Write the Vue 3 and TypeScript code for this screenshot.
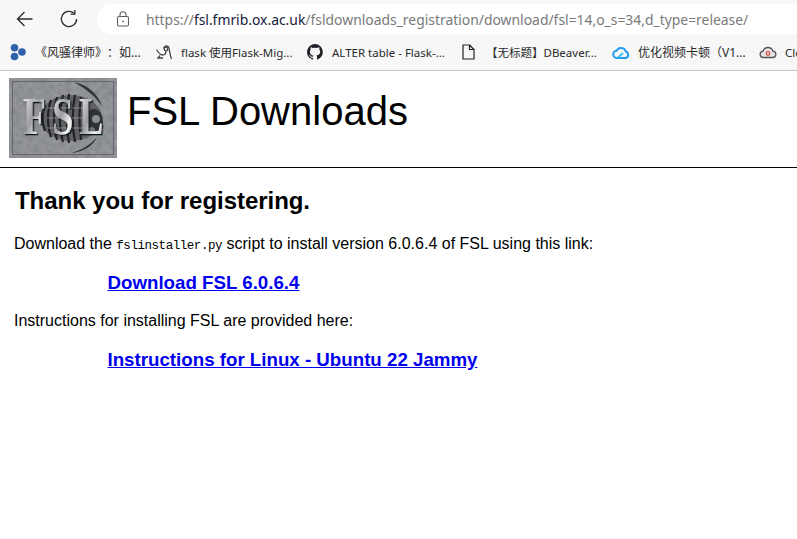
<script setup lang="ts">
interface Bookmark { label: string; icon: string; width: number; wide?: boolean }
const bookmarks: Bookmark[] = [
  { label: '《风骚律师》：如...', icon: 'dots', width: 146, wide: true },
  { label: 'flask 使用Flask-Mig...', icon: 'bird', width: 151 },
  { label: 'ALTER table - Flask-...', icon: 'github', width: 154 },
  { label: '【无标题】DBeaver...', icon: 'doc', width: 152 },
  { label: '优化视频卡顿（V1...', icon: 'cloud', width: 147, wide: true },
  { label: 'Cloud', icon: 'cloudred', width: 60 },
]
</script>

<template>
  <div class="page">
    <div class="chrome">
      <div class="toolbar">
        <svg class="nav back" width="20" height="20" viewBox="0 0 20 20" fill="none" stroke="#2b2b2b" stroke-width="1.3">
          <path d="M17.500 10H2.500M9.500 3 2.500 10l7 7" />
        </svg>
        <svg class="nav reload" width="20" height="20" viewBox="0 0 20 20" fill="none" stroke="#2b2b2b" stroke-width="1.3">
          <path d="M15.200 4.400A7.600 7.600 0 1 0 17.600 10" />
          <path d="M15.800 1v4.200h-4.200" />
        </svg>
        <div class="omnibox">
          <svg class="lock" width="14" height="16" viewBox="0 0 14 16" fill="none" stroke="#5f5f5f" stroke-width="1.1">
            <rect x="1.500" y="5.500" width="11" height="9.500" rx="1.600" />
            <path d="M4 5.500V3.800a3 3 0 0 1 6 0v1.700" />
            <circle cx="7" cy="10.300" r=".9" fill="#5f5f5f" stroke="none" />
          </svg>
          <span class="url"><span class="dim">https://</span><span class="host">fsl.fmrib.ox.ac.uk</span><span class="dim">/fsldownloads_registration/download/fsl=14,o_s=34,d_type=release/</span></span>
        </div>
      </div>
      <div class="bookmarks">
        <div v-for="b in bookmarks" :key="b.label" class="bookmark" :style="{ width: b.width + 'px' }">
          <svg class="bicon" width="18" height="18" viewBox="0 0 18 18">
            <g v-if="b.icon === 'dots'" fill="#2f62ab">
              <circle cx="5.500" cy="4.800" r="3.800" /><circle cx="13" cy="9" r="3.800" /><circle cx="5.500" cy="13.500" r="3.800" />
            </g>
            <g v-else-if="b.icon === 'bird'" fill="none" stroke="#444" stroke-width="1.300">
              <path d="M1.500 6.500c1.500 2.500 3.500 5.500 6 5.500 2.500 0 3.500-2 3.500-4M5 12.500l-2 2.500h5" />
              <path d="M8.500 5.500c.5-3 5-3.500 5.500-.5.500 3 1 7 2.500 11" />
              <circle cx="11" cy="6" r="1.800" />
            </g>
            <g v-else-if="b.icon === 'github'">
              <path fill="#1f2328" d="M9 1a8 8 0 0 0-2.500 15.600c.4.1.5-.2.5-.4v-1.400c-2.200.5-2.700-1-2.700-1-.4-.9-.9-1.200-.9-1.200-.7-.5.100-.5.100-.5.800.1 1.200.8 1.200.8.700 1.200 1.900.9 2.300.7.100-.5.300-.9.500-1.100-1.800-.2-3.600-.9-3.600-4 0-.9.300-1.600.8-2.100-.1-.2-.4-1 .1-2.100 0 0 .7-.2 2.200.8a7.600 7.600 0 0 1 4 0c1.500-1 2.200-.8 2.200-.8.400 1.100.200 1.900.100 2.100.5.600.8 1.300.8 2.100 0 3.100-1.900 3.700-3.600 3.900.300.200.500.700.500 1.500v2.200c0 .200.100.500.600.400A8 8 0 0 0 9 1z" />
            </g>
            <g v-else-if="b.icon === 'doc'" fill="none" stroke="#222" stroke-width="1.200">
              <path d="M3 2h6.500L14 6.500V16H3zM9.500 2v4.500H14" stroke-linejoin="round" />
            </g>
            <g v-else-if="b.icon === 'cloud'" fill="none" stroke="#1d9bf0" stroke-width="1.900">
              <path d="M5 15a3.600 3.600 0 0 1-.4-7.200 4.900 4.900 0 0 1 9.200.8A3.300 3.300 0 0 1 13.500 15z" />
              <path d="M5.500 15 11 10" stroke="#35c2e8" />
            </g>
            <g v-else>
              <path d="M4.500 14.500a3.200 3.200 0 0 1-.3-6.400 5 5 0 0 1 9.600 0 3.200 3.200 0 0 1-.3 6.400z" fill="#e6e6e6" stroke="#555" stroke-width="1.300" />
              <circle cx="9" cy="10.500" r="2.400" fill="#d9534f" />
              <circle cx="9" cy="10.500" r=".9" fill="#fff" />
            </g>
          </svg>
          <span class="blabel" :class="{ wide: b.wide }">{{ b.label }}</span>
        </div>
      </div>
    </div>

    <header class="site-header">
      <svg class="logo" width="108" height="80" viewBox="0 0 108 80">
        <defs>
          <filter id="grain" x="0" y="0" width="100%" height="100%">
            <feTurbulence type="fractalNoise" baseFrequency=".16" numOctaves="3" seed="7" result="n" />
            <feColorMatrix in="n" type="matrix" values="0 0 0 0 .38  0 0 0 0 .39  0 0 0 0 .42  .9 0 0 0 -.2" result="c" />
            <feComposite in="c" in2="SourceGraphic" operator="over" />
          </filter>
          <filter id="soft"><feGaussianBlur stdDeviation=".6" /></filter>
          <filter id="lift" x="-20%" y="-20%" width="150%" height="150%">
            <feDropShadow dx="1.300" dy="1.300" stdDeviation=".6" flood-color="#111214" flood-opacity="1" />
          </filter>
          <linearGradient id="metal" x1="0" y1="0" x2="1" y2="1">
            <stop offset="0" stop-color="#fafafa" />
            <stop offset=".45" stop-color="#9c9d9f" />
            <stop offset=".72" stop-color="#f4f4f4" />
            <stop offset="1" stop-color="#a4a5a8" />
          </linearGradient>
        </defs>
        <rect width="108" height="80" fill="#85878d" filter="url(#grain)" />
        <rect x="3.500" y="3.500" width="101" height="73" fill="none" stroke="#62656c" />
        <g filter="url(#soft)">
          <ellipse cx="62" cy="40" rx="31" ry="23" fill="#5e6065" />
          <g stroke="#222427" stroke-width="2.200" fill="none">
            <path d="M36 27c-3 8-3 18 0 26M42 22c-4 11-4 26 0 37M48 19c-4 13-4 30 0 43M54 17c-4 15-4 33 0 47M60 16c-3 16-3 33 0 49M66 17c-3 15-3 31 0 47M72 19c-2 13-2 29 0 43" />
            <path d="M38 30h36M38 40h36M38 50h36" stroke="#adafb2" stroke-width="1.200" stroke-opacity=".6" />
          </g>
          <ellipse cx="85" cy="44" rx="9" ry="13" fill="#2e3034" />
          <circle cx="87" cy="41" r="4" fill="#8a8c90" />
          <circle cx="83" cy="52" r="3" fill="#6f7175" />
          <path d="M65 4c14 3 24 12 28 24-7-10-16-17-28-24zM62 75c13-1 22-7 26-16-7 8-15 13-26 16z" fill="#33363b" />
        </g>
        <g class="logo-letters" filter="url(#lift)">
          <text class="logo-text" transform="translate(14 56) scale(.72 1)">F</text>
          <text class="logo-text" transform="translate(43 56) scale(.74 1)">S</text>
          <text class="logo-text" transform="translate(70 56) scale(.7 1)">L</text>
        </g>
      </svg>
      <h1 class="site-title">FSL Downloads</h1>
    </header>

    <main class="content">
      <h2 class="thanks">Thank you for registering.</h2>
      <p class="para">Download the <code class="mono">fslinstaller.py</code> script to install version 6.0.6.4 of FSL using this link:</p>
      <p class="linkline"><a href="#" class="biglink">Download FSL 6.0.6.4</a></p>
      <p class="para">Instructions for installing FSL are provided here:</p>
      <p class="linkline"><a href="#" class="biglink">Instructions for Linux - Ubuntu 22 Jammy</a></p>
    </main>
  </div>
</template>

<style>
html, body { margin: 0; background: #fff; overflow: hidden; }
</style>

<style scoped>
.page {
  width: 797px;
  height: 539px;
  overflow: hidden;
  background: #fff;
  font-family: "Liberation Sans", Arial, sans-serif;
  color: #000;
}
.chrome {
  height: 70px;
  background: #f7f7f7;
  border-bottom: 1px solid #c6c6c6;
}
.toolbar {
  height: 38px;
  display: flex;
  align-items: center;
  padding-left: 15px;
}
.reload { margin-left: 24px; }
.omnibox {
  margin-left: 18px;
  flex: 1;
  height: 30px;
  background: #fff;
  border-radius: 15px 0 0 15px;
  display: flex;
  align-items: center;
  padding-left: 19px;
  overflow: hidden;
}
.url {
  margin-left: 16px;
  font-family: "Noto Sans", "Open Sans", sans-serif;
  font-size: 13.900px;
  white-space: nowrap;
}
.dim { color: #7a7a7a; }
.host { color: #14203c; }
.bookmarks {
  height: 28px;
  display: flex;
  align-items: center;
  padding-left: 9px;
  overflow: hidden;
}
.bookmark {
  display: flex;
  align-items: center;
  flex: none;
  gap: 8px;
}
.bicon { flex: none; }
.blabel {
  font-family: "Noto Sans", "Noto Sans CJK SC", sans-serif;
  font-size: 11.500px;
  text-spacing-trim: space-all;
  color: #2a2a2a;
  white-space: nowrap;
}
.blabel.wide { font-size: 12px; }
.site-header {
  height: 97px;
  box-sizing: border-box;
  border-bottom: 1px solid #000;
  display: flex;
  align-items: flex-start;
  padding: 7px 0 0 9px;
}
.logo { flex: none; }
.logo-text {
  font-family: "Liberation Serif", serif;
  font-size: 52px;
  font-weight: 700;
  fill: url(#metal);
}
.site-title {
  margin: 10px 0 0 10px;
  font-size: 40px;
  font-weight: 400;
  line-height: 46px;
}
.content { padding: 0 14px; }
.thanks {
  margin: 19px 0 0 1px;
  font-size: 24px;
  line-height: 28px;
  font-weight: 700;
  letter-spacing: -.04px;
}
.para {
  margin: 19px 0 0;
  font-size: 16px;
  line-height: 20px;
}
.para + .linkline { margin-top: 17px; }
.linkline + .para { margin-top: 16px; }
.mono {
  font-family: "Liberation Mono", "DejaVu Sans Mono", monospace;
  font-size: 12.500px;
  letter-spacing: -.45px;
  line-height: 1;
}
.linkline {
  margin: 17px 0 0 93.500px;
  line-height: 24px;
  font-size: 18.720px;
  font-weight: 700;
}
.biglink { color: #0000ee; }
</style>
